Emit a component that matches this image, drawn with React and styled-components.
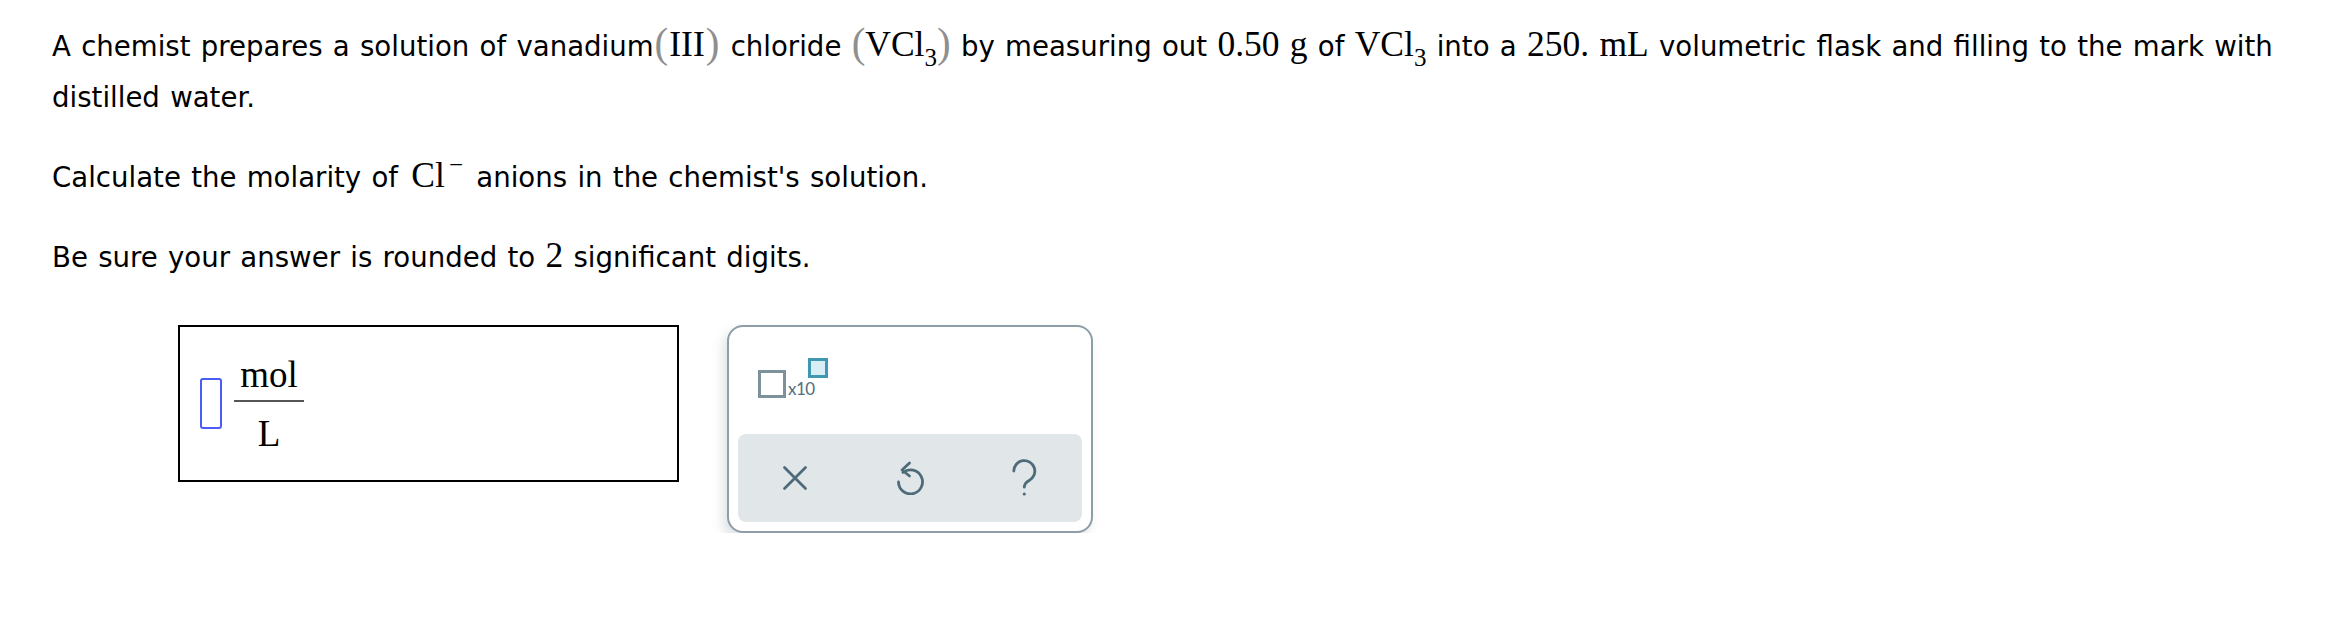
import React from "react";
import styled, { createGlobalStyle } from "styled-components";

const GlobalStyle = createGlobalStyle`
  html, body {
    margin: 0;
    padding: 0;
    background: #fff;
  }
  body {
    font-family: "DejaVu Sans", Verdana, sans-serif;
    color: #000;
  }
`;

const Page = styled.div`
  padding: 21px 0 0 52px;
`;

const Para = styled.p`
  margin: 0 0 29px 0;
  font-size: 27.6px;
  line-height: 51px;
  white-space: nowrap;
  word-spacing: 1.5px;
`;

const M = styled.span`
  font-family: "Liberation Serif", "Times New Roman", serif;
  font-size: 35.5px;
  line-height: 0;
  word-spacing: 0;
  margin: 0 ${(p) => p.$pad || 0}px;
`;

const Paren = styled.span`
  display: inline-block;
  font-family: "Liberation Serif", serif;
  font-size: 41px;
  line-height: 0;
  color: #8f8f8f;
  margin: 0 ${(p) => p.$gap ?? 0}px;
  transform: scaleY(1.05);
`;

const Sub = styled.span`
  font-size: 25px;
  line-height: 0;
  vertical-align: -10px;
`;

const Sup = styled.span`
  font-size: 25px;
  line-height: 0;
  vertical-align: 14px;
  margin-left: 4px;
`;

const AnswerRow = styled.div`
  display: flex;
  align-items: flex-start;
  gap: 48px;
  margin: 42px 0 0 126px;
`;

const AnswerBox = styled.div`
  box-sizing: border-box;
  width: 501px;
  height: 157px;
  border: 2px solid #000;
  display: flex;
  align-items: center;
  padding-left: 20px;
`;

const Cursor = styled.div`
  box-sizing: border-box;
  width: 22px;
  height: 51px;
  border: 2px solid #4a5cf4;
  border-radius: 3px;
`;

const Fraction = styled.div`
  display: inline-flex;
  flex-direction: column;
  align-items: center;
  margin: 0 0 0 12px;
  font-family: "Liberation Serif", "Times New Roman", serif;
  font-size: 37px;
  line-height: 37px;
`;

const Num = styled.span`
  padding-bottom: 7px;
`;

const Den = styled.span`
  padding-top: 13px;
`;

const Bar = styled.div`
  width: 70px;
  height: 2px;
  background: #555;
`;

const Panel = styled.div`
  box-sizing: border-box;
  width: 366px;
  height: 208px;
  border: 2px solid #8d9ea7;
  border-radius: 16px;
  padding: 9px;
  background: #fff;
  box-shadow: -4px 6px 12px rgba(70, 90, 100, 0.18);
  display: flex;
  flex-direction: column;
`;

const TopArea = styled.div`
  height: 98px;
  padding: 22px 0 0 20px;
  box-sizing: border-box;
`;

const Exponent = styled.div`
  display: inline-flex;
  align-items: flex-start;
`;

const BaseBox = styled.div`
  box-sizing: border-box;
  width: 28px;
  height: 28px;
  margin-top: 12px;
  border: 3px solid #7c919a;
`;

const Times = styled.span`
  align-self: flex-end;
  font-family: Lato, "Open Sans", sans-serif;
  font-size: 17px;
  line-height: 17px;
  margin: 0 0 1px 2px;
  color: #536e7b;
  letter-spacing: -0.5px;
`;

const PowBox = styled.div`
  box-sizing: border-box;
  width: 20px;
  height: 20px;
  margin-left: -7px;
  border: 3px solid #3f97b1;
  background: #d6eef4;
`;

const Toolbar = styled.div`
  display: flex;
  height: 88px;
  background: #e1e6e9;
  border-radius: 8px;
`;

const ToolButton = styled.button`
  flex: 1;
  display: flex;
  align-items: center;
  justify-content: center;
  background: none;
  border: none;
  padding: 0;
  cursor: pointer;
  color: #4e6b79;
`;

const ClearIcon = () => (
  <svg width="26" height="26" viewBox="0 0 26 26" fill="none" stroke="currentColor" strokeWidth="2.8" strokeLinecap="round">
    <path d="M2.5 2.5 L23.5 23.5 M23.5 2.5 L2.5 23.5" />
  </svg>
);

const UndoIcon = () => (
  <svg width="27" height="34" viewBox="0 0 27 34" fill="none" stroke="currentColor" strokeWidth="2.8" strokeLinecap="round" strokeLinejoin="round">
    <path d="M6 11.5 A12 12 0 1 1 1.5 21" />
    <path d="M12.5 2 L5 9 L12.5 15" />
  </svg>
);

const HelpIcon = () => (
  <svg width="25" height="38" viewBox="0 0 25 38" fill="none" stroke="currentColor" strokeWidth="2.8" strokeLinecap="round">
    <path d="M1.8 12 A10.5 10.5 0 1 1 17.2 21.4 C13.8 23.2 12.3 25 12.3 28.2" />
    <circle cx="12.3" cy="35" r="1.6" fill="currentColor" stroke="none" />
  </svg>
);

export default function App() {
  return (
    <>
      <GlobalStyle />
      <Page>
        <Para>
          A chemist prepares a solution of vanadium<Paren $gap={1}>(</Paren>
          <M>III</M>
          <Paren $gap={1}>)</Paren> chloride <Paren>(</Paren>
          <M>
            VCl<Sub>3</Sub>
          </M>
          <Paren>)</Paren> by measuring out <M>0.50</M> <M>g</M> of{" "}
          <M>
            VCl<Sub>3</Sub>
          </M>{" "}
          into a <M>250.</M> <M>mL</M> volumetric flask and filling to the mark with
          <br />
          distilled water.
        </Para>
        <Para>
          Calculate the molarity of{" "}
          <M $pad={3}>
            Cl<Sup>−</Sup>
          </M>{" "}
          anions in the chemist's solution.
        </Para>
        <Para>
          Be sure your answer is rounded to <M>2</M> significant digits.
        </Para>
        <AnswerRow>
          <AnswerBox>
            <Cursor />
            <Fraction>
              <Num>mol</Num>
              <Bar />
              <Den>L</Den>
            </Fraction>
          </AnswerBox>
          <Panel>
            <TopArea>
              <Exponent>
                <BaseBox />
                <Times>x10</Times>
                <PowBox />
              </Exponent>
            </TopArea>
            <Toolbar>
              <ToolButton aria-label="Clear">
                <ClearIcon />
              </ToolButton>
              <ToolButton aria-label="Undo">
                <UndoIcon />
              </ToolButton>
              <ToolButton aria-label="Help">
                <HelpIcon />
              </ToolButton>
            </Toolbar>
          </Panel>
        </AnswerRow>
      </Page>
    </>
  );
}
